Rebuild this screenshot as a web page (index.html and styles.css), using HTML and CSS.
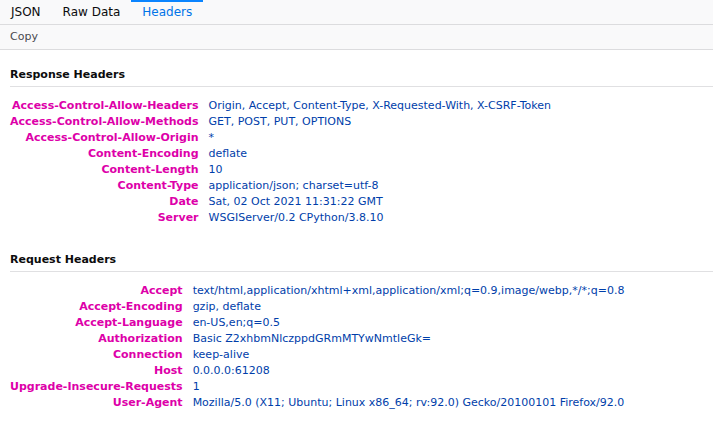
FILE: index.html
```html
<!DOCTYPE html>
<html>
<head>
<meta charset="utf-8">
<link rel="stylesheet" href="styles.css">
</head>
<body>
<div class="tabs">
  <div class="tab">JSON</div>
  <div class="tab">Raw Data</div>
  <div class="tab active">Headers</div>
</div>
<div class="toolbar"><span class="btn">Copy</span></div>
<div class="panel">
  <section class="section">
    <h2 class="heading">Response Headers</h2>
    <div class="rows">
      <div class="name">Access-Control-Allow-Headers</div><div class="value">Origin, Accept, Content-Type, X-Requested-With, X-CSRF-Token</div>
      <div class="name">Access-Control-Allow-Methods</div><div class="value">GET, POST, PUT, OPTIONS</div>
      <div class="name">Access-Control-Allow-Origin</div><div class="value">*</div>
      <div class="name">Content-Encoding</div><div class="value">deflate</div>
      <div class="name">Content-Length</div><div class="value">10</div>
      <div class="name">Content-Type</div><div class="value">application/json; charset=utf-8</div>
      <div class="name">Date</div><div class="value">Sat, 02 Oct 2021 11:31:22 GMT</div>
      <div class="name">Server</div><div class="value">WSGIServer/0.2 CPython/3.8.10</div>
    </div>
  </section>
  <section class="section">
    <h2 class="heading">Request Headers</h2>
    <div class="rows">
      <div class="name">Accept</div><div class="value">text/html,application/xhtml+xml,application/xml;q=0.9,image/webp,*/*;q=0.8</div>
      <div class="name">Accept-Encoding</div><div class="value">gzip, deflate</div>
      <div class="name">Accept-Language</div><div class="value">en-US,en;q=0.5</div>
      <div class="name">Authorization</div><div class="value">Basic Z2xhbmNlczppdGRmMTYwNmtleGk=</div>
      <div class="name">Connection</div><div class="value">keep-alive</div>
      <div class="name">Host</div><div class="value">0.0.0.0:61208</div>
      <div class="name">Upgrade-Insecure-Requests</div><div class="value">1</div>
      <div class="name">User-Agent</div><div class="value">Mozilla/5.0 (X11; Ubuntu; Linux x86_64; rv:92.0) Gecko/20100101 Firefox/92.0</div>
    </div>
  </section>
</div>
</body>
</html>
```
FILE: styles.css
```css
html, body {
  margin: 0;
  padding: 0;
  background: #ffffff;
  font-family: "DejaVu Sans", sans-serif;
  font-size: 11px;
  color: #0c0c0d;
}

.tabs {
  display: flex;
  background: #f9f9fa;
  border-bottom: 1px solid #dcdcde;
  height: 24px;
}

.tab {
  padding: 0 11px;
  font-size: 12px;
  line-height: 24px;
  color: #0c0c0d;
}

.tab.active {
  color: #0074e8;
  box-shadow: inset 0 2px 0 #0a84ff;
}

.toolbar {
  background: #f9f9fa;
  border-bottom: 1px solid #dcdcde;
  height: 24px;
  display: flex;
  align-items: center;
  padding: 0 10px;
}

.btn {
  font-size: 11px;
  line-height: 24px;
  color: #4a4a4f;
}

.panel {
  padding: 17px 0 0 10px;
}

.section {
  margin-bottom: 26px;
}

.heading {
  margin: 0;
  font-size: 11px;
  font-weight: bold;
  line-height: 16px;
  padding-bottom: 3px;
  border-bottom: 1px solid #e0e0e2;
  color: #0c0c0d;
}

.rows {
  display: grid;
  grid-template-columns: max-content 1fr;
  column-gap: 10px;
  margin-top: 11px;
  line-height: 16px;
}

.name {
  text-align: right;
  font-weight: bold;
  color: #dd00a9;
  white-space: nowrap;
}

.value {
  color: #003eaa;
  white-space: nowrap;
}
```
